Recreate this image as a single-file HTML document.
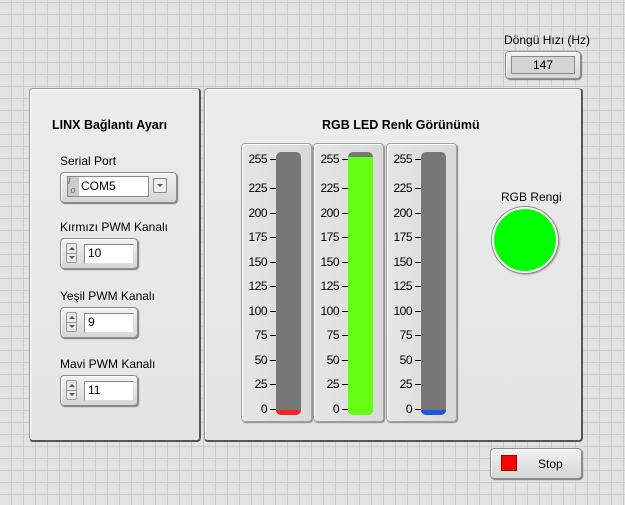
<!DOCTYPE html>
<html><head><meta charset="utf-8"><style>
*{margin:0;padding:0;box-sizing:border-box}
body{width:625px;height:505px;overflow:hidden;position:relative;font-family:"Liberation Sans",sans-serif;font-size:12px;color:#000;
background-color:#e3e3e3;
background-image:linear-gradient(to right,#cbcbcb 1px,transparent 1px),linear-gradient(to bottom,#cbcbcb 1px,transparent 1px);
background-size:12px 12px;background-position:11px 2px;}
.a{position:absolute}
.panel{position:absolute;background:linear-gradient(#ececec,#e4e4e4);border:1px solid #9a9a9a;border-right:2px solid #555;border-bottom:2px solid #555;border-radius:4px;box-shadow:inset 1px 1px 0 #fff}
.lbl{position:absolute;font-size:12px;white-space:nowrap}
.frame{position:absolute;background:linear-gradient(#f2f2f2,#d6d6d6);border:1px solid #8c8c8c;border-radius:4px;box-shadow:1px 1px 1px #777, inset 1px 1px 0 #fff}
.box{position:absolute;background:#fff;border:1px solid #888;border-right-color:#ddd;border-bottom-color:#ddd;font-size:12px;padding-left:3px;line-height:17px}
.spin{position:absolute;width:11px;height:20px;border:1px solid #999;background:#e8e8e8;border-radius:2px}
.spin:before{content:"";position:absolute;left:2px;top:3px;border:3px solid transparent;border-bottom:3px solid #555;border-top:0}
.spin:after{content:"";position:absolute;left:2px;bottom:3px;border:3px solid transparent;border-top:3px solid #555;border-bottom:0}
.spin i{position:absolute;left:0;right:0;top:9px;border-top:1px solid #999}
.tank{position:absolute;top:143px;width:71px;height:279px;background:linear-gradient(to right,#e6e6e6,#d9d9d9);border:1px solid #a0a0a0;border-radius:4px;box-shadow:1px 1px 1px #888, inset 1px 1px 0 #fff}
.bar{position:absolute;left:34px;top:8px;width:25px;height:263px;background:#777;border-radius:5px;overflow:hidden}
.s{position:absolute;right:46px;font-size:12px;line-height:12px;text-align:right;letter-spacing:-0.5px}
.s:after{content:"";position:absolute;right:-9px;top:6px;width:6px;border-top:1px solid #000}
</style></head><body>

<div class="lbl" style="left:504px;top:33px">Döngü Hızı (Hz)</div>
<div class="frame" style="left:505px;top:51px;width:76px;height:28px"></div>
<div class="a" style="left:511px;top:56px;width:64px;height:18px;background:#d4d4d4;border:1px solid #888;text-align:center;line-height:16px">147</div>

<div class="panel" style="left:29px;top:88px;width:172px;height:354px"></div>
<div class="panel" style="left:204px;top:88px;width:379px;height:354px"></div>

<div class="lbl" style="left:52px;top:118px;font-weight:bold;font-size:12.5px">LINX Bağlantı Ayarı</div>

<div class="lbl" style="left:60px;top:154px">Serial Port</div>
<div class="frame" style="left:60px;top:172px;width:117px;height:31px"></div>
<div class="a" style="left:67px;top:176px;width:82px;height:21px;background:#fff;border:1px solid #888"></div>
<div class="a" style="left:68px;top:177px;width:11px;height:19px;background:#ccc;font-size:9px;color:#666;line-height:9px;font-style:italic">I<br>&nbsp;o</div>
<div class="lbl" style="left:81px;top:179px">COM5</div>
<div class="a" style="left:153px;top:178px;width:14px;height:15px;border:1px solid #888;background:#eee;border-radius:2px"></div>
<div class="a" style="left:157px;top:184px;border:3px solid transparent;border-top:3px solid #555;border-bottom:0"></div>

<div class="lbl" style="left:60px;top:220px">Kırmızı PWM Kanalı</div>
<div class="frame" style="left:60px;top:238px;width:78px;height:31px"></div>
<div class="spin" style="left:66px;top:243px"><i></i></div>
<div class="box" style="left:84px;top:244px;width:50px;height:20px">10</div>

<div class="lbl" style="left:60px;top:289px">Yeşil PWM Kanalı</div>
<div class="frame" style="left:60px;top:307px;width:78px;height:31px"></div>
<div class="spin" style="left:66px;top:312px"><i></i></div>
<div class="box" style="left:84px;top:313px;width:50px;height:20px">9</div>

<div class="lbl" style="left:60px;top:357px">Mavi PWM Kanalı</div>
<div class="frame" style="left:60px;top:375px;width:78px;height:31px"></div>
<div class="spin" style="left:66px;top:380px"><i></i></div>
<div class="box" style="left:84px;top:381px;width:50px;height:20px">11</div>

<div class="lbl" style="left:322px;top:118px;font-weight:bold;font-size:12.5px">RGB LED Renk Görünümü</div>

<div class="tank" style="left:241px"><div class="bar"><div class="a" style="left:0;bottom:0;width:25px;height:5px;background:#f22"></div></div></div>
<div class="tank" style="left:313px"><div class="bar"><div class="a" style="left:0;bottom:0;width:25px;height:258px;background:#66ff11;border-radius:0 0 5px 5px"></div></div></div>
<div class="tank" style="left:386px"><div class="bar"><div class="a" style="left:0;bottom:0;width:25px;height:5px;background:#2255dd"></div></div></div>

<div id="sc"></div>
<script>
var vals=[255,225,200,175,150,125,100,75,50,25,0],h="";
[241,313,386].forEach(function(x){vals.forEach(function(v){var y=Math.round(409-0.982*v)-6;
h+='<div class="s" style="left:'+(x-20)+'px;width:46px;top:'+y+'px;right:auto">'+v+'</div>';});});
document.getElementById("sc").innerHTML=h;
</script>
<style>.s{text-align:right}</style>

<div class="lbl" style="left:501px;top:190px">RGB Rengi</div>
<div class="a" style="left:492px;top:207px;width:66px;height:66px;border-radius:50%;background:#00ff00;border:2px solid #fff;box-shadow:0 0 0 1px #888,1px 1px 2px #666"></div>

<div class="frame" style="left:490px;top:448px;width:92px;height:31px"></div>
<div class="a" style="left:501px;top:455px;width:16px;height:16px;background:#ff0000;border:1px solid #900"></div>
<div class="lbl" style="left:538px;top:457px">Stop</div>
</body></html>
